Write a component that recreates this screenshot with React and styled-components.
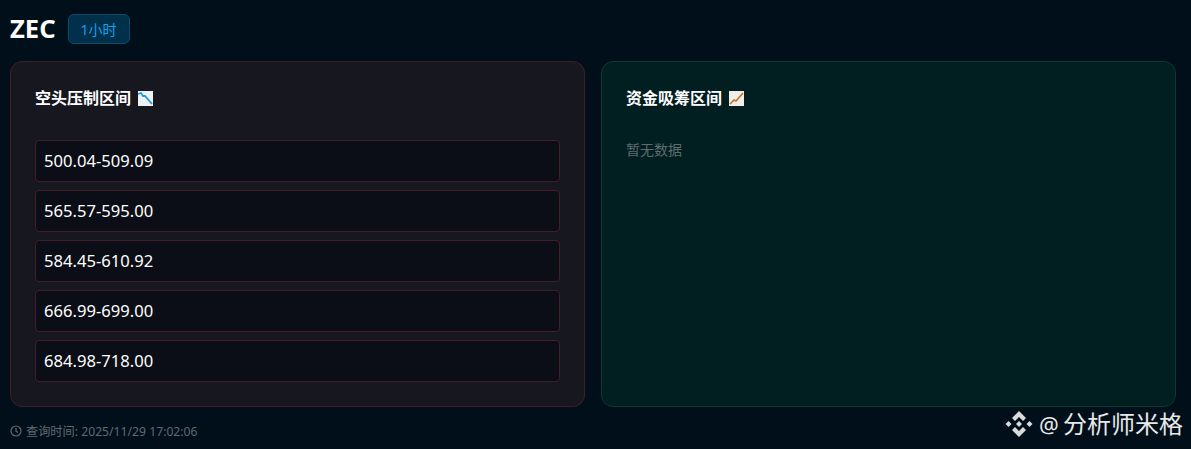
import React from 'react';
import styled, { createGlobalStyle } from 'styled-components';

const GlobalStyle = createGlobalStyle`
    html, body {
        margin: 0;
        padding: 0;
        background: #000f1a;
    }
    body {
        font-family: "Noto Sans", "Noto Sans CJK SC", sans-serif;
    }
`;

const Page = styled.div`
    position: relative;
    width: 1191px;
    height: 449px;
    box-sizing: border-box;
    padding: 14px 15px 0 10px;
    overflow: hidden;
    background: #000f1a;
`;

const Header = styled.div`
    display: flex;
    align-items: center;
    gap: 12px;
    height: 30px;
    margin-bottom: 17px;
`;

const Symbol = styled.h1`
    margin: 0;
    font-size: 25.6px;
    line-height: 30px;
    font-weight: 700;
    color: #fff;
`;

const Badge = styled.span`
    box-sizing: border-box;
    width: 62px;
    height: 30px;
    display: flex;
    align-items: center;
    justify-content: center;
    border: 1px solid #0c4a6e;
    border-radius: 6px;
    background: #01304a;
    color: #14a0ea;
    font-size: 14px;
`;

const Panels = styled.div`
    display: grid;
    grid-template-columns: 575px 575px;
    gap: 16px;
`;

const Panel = styled.section`
    box-sizing: border-box;
    height: 346px;
    padding: 24px;
    border-radius: 12px;
    border: 1px solid ${(p) => (p.$tone === 'short' ? '#401e28' : '#0b3b30')};
    background: ${(p) => (p.$tone === 'short' ? '#17171f' : '#011e20')};
`;

const PanelTitle = styled.h2`
    display: flex;
    align-items: center;
    gap: 3px;
    margin: 0 0 30px;
    height: 24px;
    font-size: 16px;
    line-height: 24px;
    font-weight: 700;
    color: #fff;
`;

const ChartIcon = styled.svg`
    width: 17px;
    height: 17px;
    flex: none;
    margin-left: 3px;
`;

const RangeList = styled.ul`
    display: flex;
    flex-direction: column;
    gap: 8px;
    margin: 0;
    padding: 0;
    list-style: none;
`;

const RangeRow = styled.li`
    box-sizing: border-box;
    height: 42px;
    display: flex;
    align-items: center;
    padding: 0 8px 2px;
    border: 1px solid #451d28;
    border-radius: 4px;
    background: #0b0e16;
    color: #fff;
    font-size: 16.6px;
`;

const Empty = styled.p`
    margin: 0;
    font-size: 14px;
    line-height: 20px;
    color: #5f6b70;
`;

const Footer = styled.div`
    display: flex;
    align-items: center;
    gap: 4px;
    margin-top: 15px;
    height: 17px;
    font-size: 12.2px;
    color: #5f6b73;
`;

const Watermark = styled.div`
    position: absolute;
    right: 8px;
    bottom: 10px;
    display: flex;
    align-items: center;
    gap: 6px;
    color: #e8e8e8;
    font-size: 24px;
    line-height: 30px;
`;

const AtSign = styled.span`
    font-size: 22px;
    margin-right: -2px;
`;

const ranges = ['500.04-509.09', '565.57-595.00', '584.45-610.92', '666.99-699.00', '684.98-718.00'];

function ChartDown() {
    return (
        <ChartIcon viewBox="0 0 17 17">
            <rect x="1" y="1" width="15" height="15" fill="#eef1f3" />
            <path d="M1 4 L4 3 L6 6 L8 6 L15 14" fill="none" stroke="#1f9be0" strokeWidth="1.8" />
        </ChartIcon>
    );
}

function ChartUp() {
    return (
        <ChartIcon viewBox="0 0 17 17">
            <rect x="1" y="1" width="15" height="15" fill="#eeeeea" />
            <path d="M2 14 L6 10 L8 11 L15 3" fill="none" stroke="#c8701c" strokeWidth="1.6" />
        </ChartIcon>
    );
}

function Clock() {
    return (
        <svg width="12" height="12" viewBox="0 0 12 12" fill="none" stroke="#5f6b73" strokeWidth="1.2">
            <circle cx="6" cy="6" r="5" />
            <path d="M6 3 V6.2 L8 7.4" />
        </svg>
    );
}

function BinanceLogo() {
    return (
        <svg width="28" height="28" viewBox="0 0 28 28" fill="#d9dcdc">
            <path d="M14 1 L21 8 L18 11 L14 7 L10 11 L7 8 Z" />
            <path d="M14 27 L7 20 L10 17 L14 21 L18 17 L21 20 Z" />
            <path d="M3.5 11 L6.5 14 L3.5 17 L0.5 14 Z" />
            <path d="M24.5 11 L27.5 14 L24.5 17 L21.5 14 Z" />
            <path d="M14 11 L17 14 L14 17 L11 14 Z" />
        </svg>
    );
}

export default function App() {
    return (
        <>
            <GlobalStyle />
            <Page>
                <Header>
                    <Symbol>ZEC</Symbol>
                    <Badge>1小时</Badge>
                </Header>
                <Panels>
                    <Panel $tone="short">
                        <PanelTitle>空头压制区间 <ChartDown /></PanelTitle>
                        <RangeList>
                            {ranges.map((r) => <RangeRow key={r}>{r}</RangeRow>)}
                        </RangeList>
                    </Panel>
                    <Panel $tone="long">
                        <PanelTitle>资金吸筹区间 <ChartUp /></PanelTitle>
                        <Empty>暂无数据</Empty>
                    </Panel>
                </Panels>
                <Footer>
                    <Clock />
                    查询时间: 2025/11/29 17:02:06
                </Footer>
                <Watermark>
                    <BinanceLogo />
                    <span><AtSign>@</AtSign> 分析师米格</span>
                </Watermark>
            </Page>
        </>
    );
}
